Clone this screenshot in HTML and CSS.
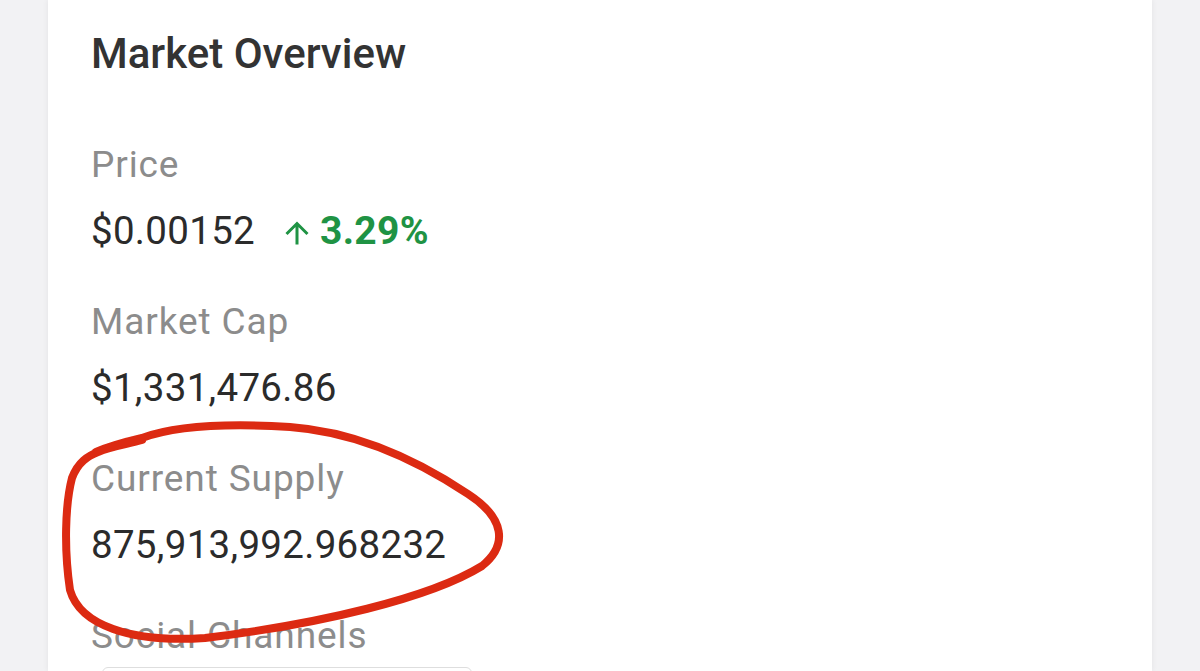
FILE: index.html
```html
<!DOCTYPE html>
<html lang="en">
<head>
<meta charset="utf-8">
<title>Market Overview</title>
<link rel="stylesheet" href="styles.css">
</head>
<body>
<main class="page">
  <section class="card">
    <h1 class="card-title">Market Overview</h1>
    <div class="stats">
      <div class="stat">
        <div class="stat-label">Price</div>
        <div class="stat-value">
          <span>$0.00152</span>
          <span class="change">
            <svg class="change-arrow" viewBox="0 0 26 24" width="26" height="24" aria-hidden="true">
              <path d="M13 23.5V2.5M2.5 13L13 2.5L23.5 13" fill="none" stroke="currentColor" stroke-width="3" stroke-linecap="butt" stroke-linejoin="miter"/>
            </svg>
            <span class="change-text">3.29%</span>
          </span>
        </div>
      </div>
      <div class="stat">
        <div class="stat-label">Market Cap</div>
        <div class="stat-value">$1,331,476.86</div>
      </div>
      <div class="stat">
        <div class="stat-label">Current Supply</div>
        <div class="stat-value">875,913,992.968232</div>
      </div>
      <div class="stat">
        <div class="stat-label">Social Channels</div>
        <div class="social-box"></div>
      </div>
    </div>
  </section>
  <svg class="annotation" viewBox="0 0 1200 671" width="1200" height="671" aria-hidden="true">
    <path d="M96 452 C 110 446, 125 442, 142 438 C 175 426, 225 423, 290 427 C 360 432, 420 462, 468 494 C 505 518, 508 545, 482 566 C 430 598, 320 624, 205 638 C 130 643, 80 625, 70 590 C 64 550, 65 505, 72 478 C 78 462, 88 456, 98 452 C 112 446, 128 444, 142 440" fill="none" stroke="#dc2a12" stroke-width="8" stroke-linecap="round" stroke-linejoin="round"/>
  </svg>
</main>
</body>
</html>
```

FILE: styles.css
```css
html, body {
  margin: 0;
  padding: 0;
}

body {
  background: #f2f2f4;
  font-family: Roboto, "Liberation Sans", Arial, sans-serif;
  width: 1200px;
  height: 671px;
  overflow: hidden;
}

.page {
  position: relative;
  width: 1200px;
  height: 671px;
  overflow: hidden;
}

.card {
  margin: 0 48px;
  height: 671px;
  overflow: hidden;
  background: #ffffff;
  box-shadow: 0 0 6px rgba(0, 0, 0, 0.07);
  padding: 29px 43px 0 43px;
  box-sizing: border-box;
}

.card-title {
  margin: 0;
  font-size: 42px;
  line-height: 50px;
  font-weight: 500;
  color: #333333;
}

.stats {
  display: flex;
  flex-direction: column;
  gap: 45px;
  margin-top: 64px;
}

.stat {
  display: flex;
  flex-direction: column;
  gap: 20px;
}

.stat-label {
  font-size: 37px;
  line-height: 44px;
  color: #8c8c8c;
  letter-spacing: 0.9px;
}

.stat-value {
  display: flex;
  align-items: center;
  font-size: 38.5px;
  line-height: 48px;
  color: #2b2b2b;
  letter-spacing: 0.3px;
}

.change {
  display: inline-flex;
  align-items: center;
  margin-left: 29px;
  color: #1f9344;
}

.change-arrow {
  display: block;
  margin-right: 10px;
  margin-top: 3px;
}

.change-text {
  font-weight: 700;
  font-size: 39px;
  letter-spacing: 0.3px;
}

.social-box {
  width: 368px;
  height: 40px;
  margin-top: -11px;
  margin-left: 11px;
  border: 1px solid #dedede;
  border-radius: 6px;
}

.annotation {
  position: absolute;
  top: 0;
  left: 0;
  pointer-events: none;
}
```
